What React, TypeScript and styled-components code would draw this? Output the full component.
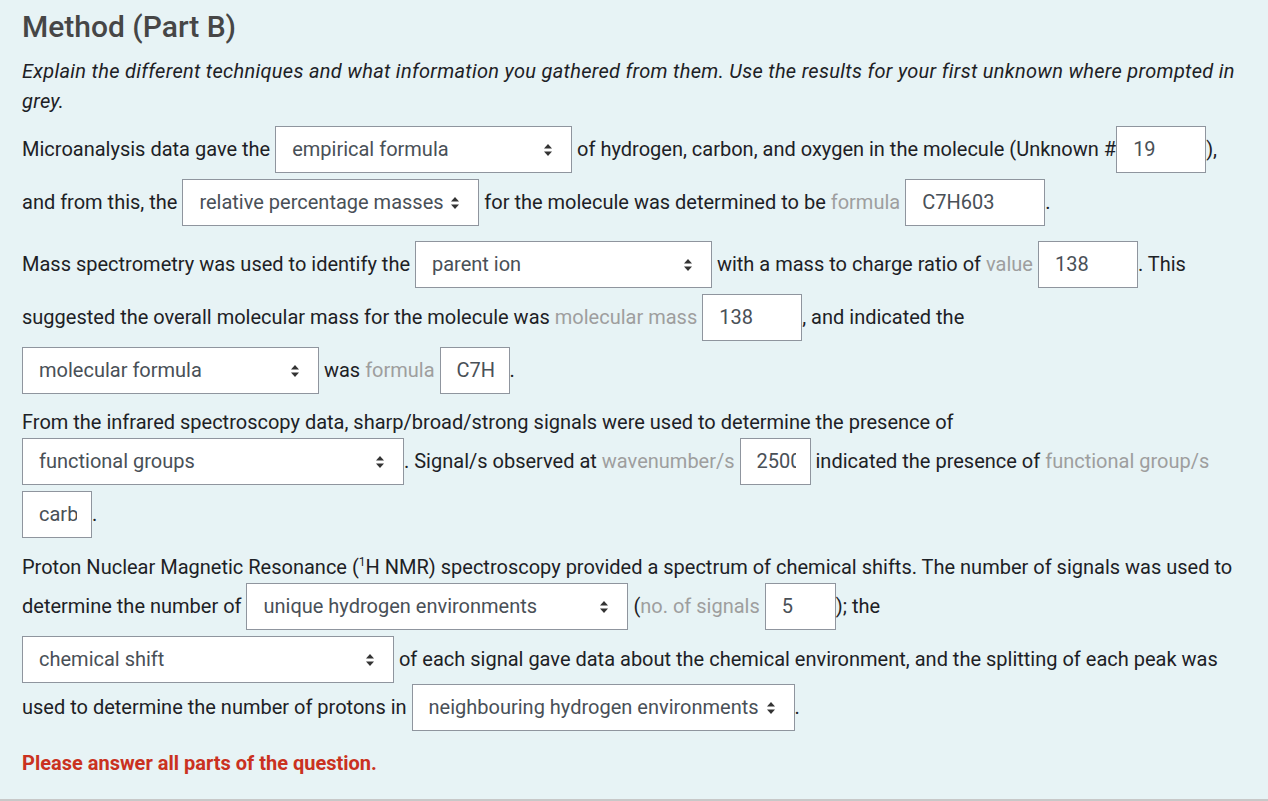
import React from 'react';
import styled, { createGlobalStyle } from 'styled-components';

const GlobalStyle = createGlobalStyle`
  html, body {
    margin: 0;
    padding: 0;
    background: #e7f3f5;
  }
  body {
    font-family: Roboto, "Liberation Sans", sans-serif;
    color: #1d2125;
  }
`;

const Panel = styled.div`
  background: #e7f3f5;
  padding: 9px 22px 20px 22px;
  min-height: 770px;
  border-bottom: 2px solid #c8c8c8;
`;

const Title = styled.h3`
  margin: 0;
  font-size: 30px;
  line-height: 36px;
  font-weight: 500;
  color: #464646;
`;

const Prompt = styled.p`
  margin: 11px 0 10px 0;
  font-size: 20px;
  line-height: 30px;
  font-style: italic;
  letter-spacing: 0.3px;
`;

const Para = styled.div<{ $mt?: number }>`
  margin-top: ${(p) => p.$mt ?? 0}px;
  font-size: 20px;
`;

// a line of the answer text; $ctl lines hold the 47px inputs
const Line = styled.div<{ $ctl?: boolean; $mt?: number }>`
  white-space: nowrap;
  height: ${(p) => (p.$ctl ? 47 : 30)}px;
  line-height: ${(p) => (p.$ctl ? 47 : 30)}px;
  margin-top: ${(p) => p.$mt ?? 0}px;
`;

const Hint = styled.span`
  color: #9e9e9e;
`;

const SelectBox = styled.span<{ $w: number }>`
  display: inline-flex;
  align-items: center;
  justify-content: space-between;
  box-sizing: border-box;
  width: ${(p) => p.$w}px;
  height: 47px;
  vertical-align: top;
  padding: 0 18px 0 16px;
  background: #fff;
  border: 1px solid #8f959e;
  color: #495057;
  line-height: 45px;
`;

const Field = styled.span<{ $w: number }>`
  display: inline-flex;
  box-sizing: border-box;
  width: ${(p) => p.$w}px;
  height: 47px;
  vertical-align: top;
  padding: 0 14px 0 16px;
  background: #fff;
  border: 1px solid #8f959e;
  color: #495057;
  line-height: 45px;
`;

const FieldText = styled.span`
  flex: 1;
  min-width: 0;
  overflow: hidden;
  white-space: nowrap;
`;

const Sup = styled.sup`
  font-size: 12px;
  line-height: 0;
`;

const Warning = styled.div`
  margin-top: 17px;
  font-size: 20px;
  line-height: 30px;
  font-weight: 700;
  color: #ca3120;
`;

const Arrows = () => (
  <svg width="10" height="14" viewBox="0 0 10 14">
    <path d="M5 1 L9 5.5 H1 Z" fill="#333" />
    <path d="M5 13 L9 8.5 H1 Z" fill="#333" />
  </svg>
);

const Select = ({ w, children }: { w: number; children: React.ReactNode }) => (
  <SelectBox $w={w}>
    <span>{children}</span>
    <Arrows />
  </SelectBox>
);

const Input = ({ w, value }: { w: number; value: string }) => (
  <Field $w={w}>
    <FieldText>{value}</FieldText>
  </Field>
);

export default function App() {
  return (
    <>
      <GlobalStyle />
      <Panel>
        <Title>Method (Part B)</Title>
        <Prompt>
          Explain the different techniques and what information you gathered from them. Use the results for your first unknown where prompted in grey.
        </Prompt>

        <Para>
          <Line $ctl>
            Microanalysis data gave the <Select w={297}>empirical formula</Select> of hydrogen, carbon, and oxygen in the molecule (Unknown #<Input w={90} value="19" />),
          </Line>
          <Line $ctl $mt={6}>
            and from this, the <Select w={297}>relative percentage masses</Select> for the molecule was determined to be <Hint>formula</Hint> <Input w={140} value="C7H603" />.
          </Line>
        </Para>

        <Para $mt={15}>
          <Line $ctl>
            Mass spectrometry was used to identify the <Select w={297}>parent ion</Select> with a mass to charge ratio of <Hint>value</Hint> <Input w={100} value="138" />. This
          </Line>
          <Line $ctl $mt={6}>
            suggested the overall molecular mass for the molecule was <Hint>molecular mass</Hint> <Input w={100} value="138" />, and indicated the
          </Line>
          <Line $ctl $mt={6}>
            <Select w={297}>molecular formula</Select> was <Hint>formula</Hint> <Input w={70} value="C7H" />.
          </Line>
        </Para>

        <Para $mt={13}>
          <Line>
            From the infrared spectroscopy data, sharp/broad/strong signals were used to determine the presence of
          </Line>
          <Line $ctl $mt={1}>
            <Select w={382}>functional groups</Select>. Signal/s observed at <Hint>wavenumber/s</Hint> <Input w={71} value="2500" /> indicated the presence of <Hint>functional group/s</Hint>
          </Line>
          <Line $ctl $mt={6}>
            <Input w={70} value="carb" />.
          </Line>
        </Para>

        <Para $mt={14}>
          <Line>
            Proton Nuclear Magnetic Resonance (<Sup>1</Sup>H NMR) spectroscopy provided a spectrum of chemical shifts. The number of signals was used to
          </Line>
          <Line $ctl $mt={1}>
            determine the number of <Select w={382}>unique hydrogen environments</Select> (<Hint>no. of signals</Hint> <Input w={71} value="5" />); the
          </Line>
          <Line $ctl $mt={6}>
            <Select w={372}>chemical shift</Select> of each signal gave data about the chemical environment, and the splitting of each peak was
          </Line>
          <Line $ctl $mt={1}>
            used to determine the number of protons in <Select w={383}>neighbouring hydrogen environments</Select>.
          </Line>
        </Para>

        <Warning>Please answer all parts of the question.</Warning>
      </Panel>
    </>
  );
}
